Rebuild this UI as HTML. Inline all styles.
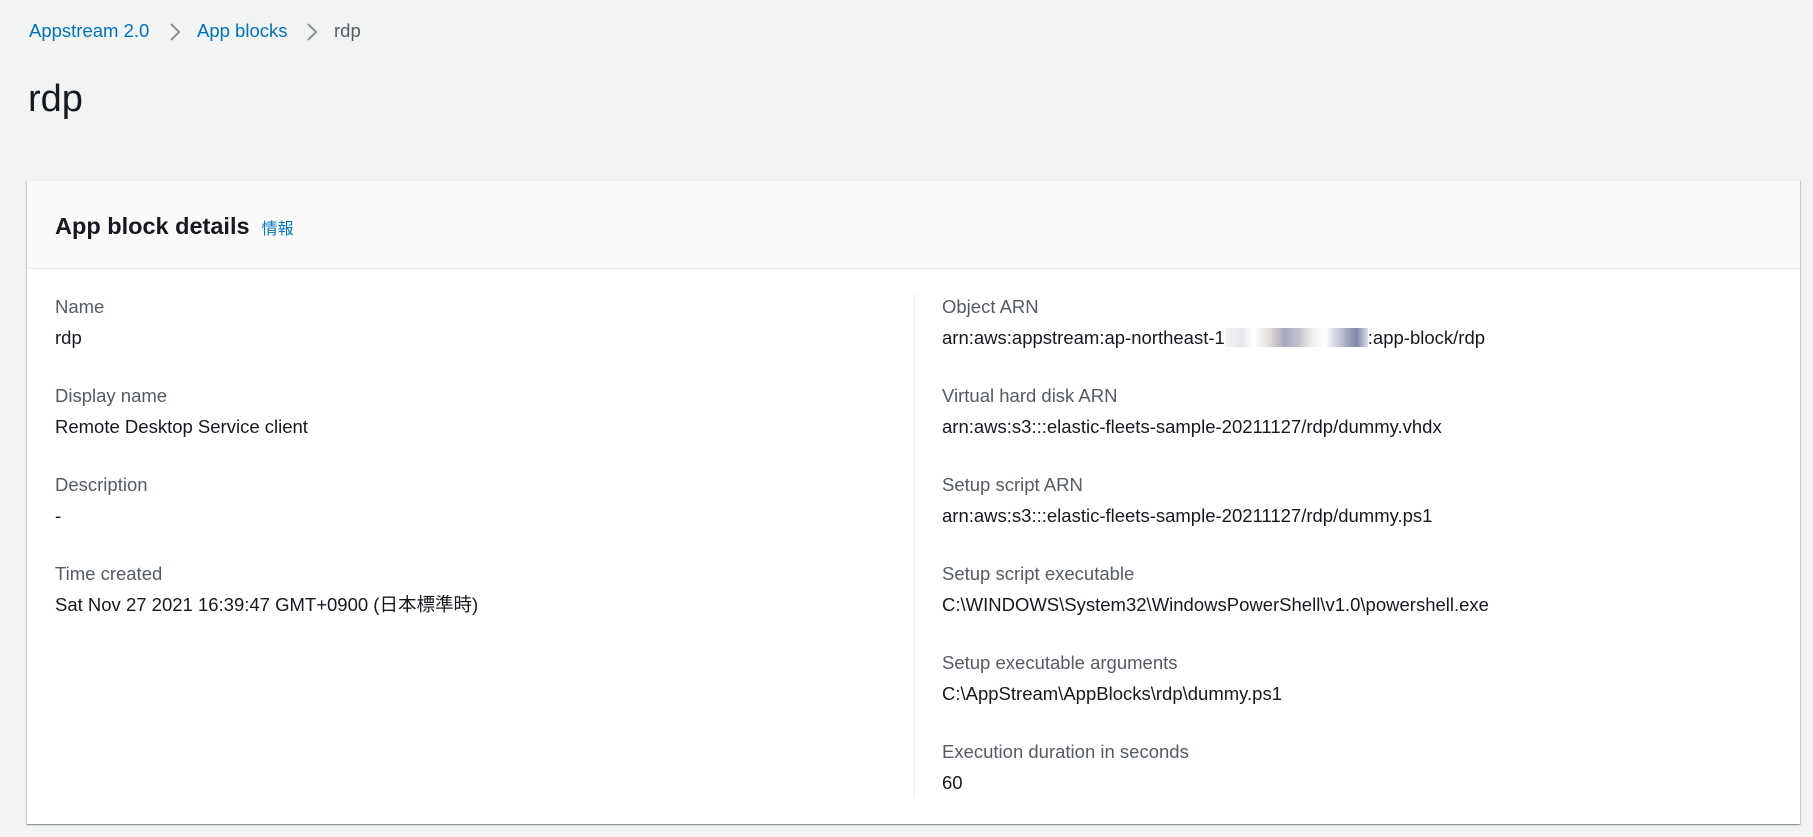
<!DOCTYPE html>
<html><head><meta charset="utf-8">
<style>
*{margin:0;padding:0;box-sizing:border-box}
html,body{width:1813px;height:837px;overflow:hidden;background:#f2f3f3;font-family:"Liberation Sans","Noto Sans CJK JP",sans-serif;color:#16191f}
.abs{position:absolute;white-space:nowrap}
.bc{font-size:18.5px;line-height:20px;top:21px}
.link{color:#0073bb}
.h1{left:28px;top:78px;font-size:38px;line-height:42px;color:#16191f}
.card{position:absolute;left:27px;top:180px;width:1773px;height:644px;background:#fff;box-shadow:0 1px 1px 0 rgba(0,28,36,.3),1px 1px 1px 0 rgba(0,28,36,.15),-1px 1px 1px 0 rgba(0,28,36,.15);border-top:1px solid #eaeded}
.hdr{position:absolute;left:0;top:0;width:100%;height:88px;background:#fafafa;border-bottom:1px solid #eaeded}
.ht{left:28px;top:32px;font-size:23.5px;font-weight:bold;line-height:26px}
.info{font-size:16px;font-weight:normal;color:#0073bb;margin-left:12px}
.lab{font-size:18.5px;color:#545b64;line-height:20px}
.val{font-size:18.5px;color:#16191f;line-height:20px}
.div{position:absolute;left:887px;top:113px;width:1px;height:504px;background:#eaeded}
.blur{display:inline-block;width:143px;height:19px;vertical-align:-3px;background:linear-gradient(90deg,#f4f4f6 0,#e4e6ec 12%,#fff 20%,#e8e0d8 30%,#a6a8bc 42%,#c4c4d0 52%,#f0ece4 60%,#fff 70%,#b8bccc 82%,#7c86a4 92%,#dde 100%)}
</style></head><body>
<div class="abs bc link" style="left:29px">Appstream 2.0</div>
<svg class="abs" style="left:168px;top:22px" width="14" height="20" viewBox="0 0 14 20"><path d="M3 2 L11 10 L3 18" fill="none" stroke="#879596" stroke-width="2"/></svg>
<div class="abs bc link" style="left:197px">App blocks</div>
<svg class="abs" style="left:305px;top:22px" width="14" height="20" viewBox="0 0 14 20"><path d="M3 2 L11 10 L3 18" fill="none" stroke="#879596" stroke-width="2"/></svg>
<div class="abs bc" style="left:334px;color:#545b64">rdp</div>
<div class="abs h1">rdp</div>
<div class="card">
 <div class="hdr"><div class="abs ht">App block details<span class="info">情報</span></div></div>
 <div class="div"></div>
 <div class="abs lab" style="left:28px;top:116px">Name</div>
 <div class="abs val" style="left:28px;top:147px">rdp</div>
 <div class="abs lab" style="left:28px;top:205px">Display name</div>
 <div class="abs val" style="left:28px;top:236px">Remote Desktop Service client</div>
 <div class="abs lab" style="left:28px;top:294px">Description</div>
 <div class="abs val" style="left:28px;top:325px">-</div>
 <div class="abs lab" style="left:28px;top:383px">Time created</div>
 <div class="abs val" style="left:28px;top:414px">Sat Nov 27 2021 16:39:47 GMT+0900 (日本標準時)</div>

 <div class="abs lab" style="left:915px;top:116px">Object ARN</div>
 <div class="abs val" style="left:915px;top:147px">arn:aws:appstream:ap-northeast-1<span class="blur"></span>:app-block/rdp</div>
 <div class="abs lab" style="left:915px;top:205px">Virtual hard disk ARN</div>
 <div class="abs val" style="left:915px;top:236px">arn:aws:s3:::elastic-fleets-sample-20211127/rdp/dummy.vhdx</div>
 <div class="abs lab" style="left:915px;top:294px">Setup script ARN</div>
 <div class="abs val" style="left:915px;top:325px">arn:aws:s3:::elastic-fleets-sample-20211127/rdp/dummy.ps1</div>
 <div class="abs lab" style="left:915px;top:383px">Setup script executable</div>
 <div class="abs val" style="left:915px;top:414px">C:\WINDOWS\System32\WindowsPowerShell\v1.0\powershell.exe</div>
 <div class="abs lab" style="left:915px;top:472px">Setup executable arguments</div>
 <div class="abs val" style="left:915px;top:503px">C:\AppStream\AppBlocks\rdp\dummy.ps1</div>
 <div class="abs lab" style="left:915px;top:561px">Execution duration in seconds</div>
 <div class="abs val" style="left:915px;top:592px">60</div>
</div>
</body></html>
